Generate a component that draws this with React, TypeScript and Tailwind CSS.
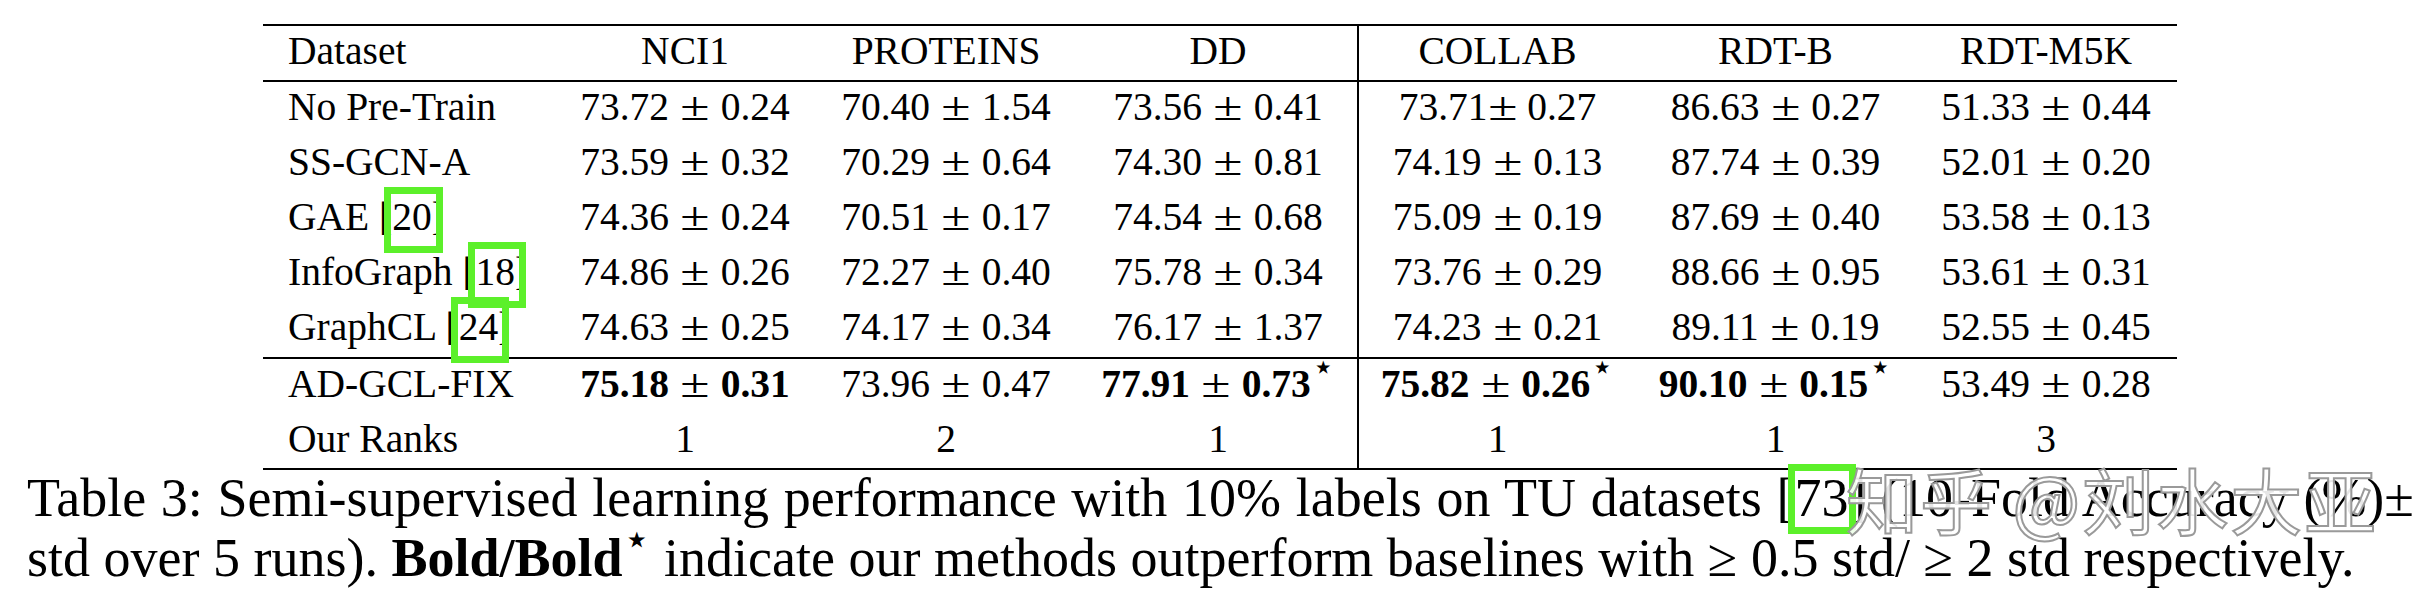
import { ReactNode } from "react";

// column widths measured off the reference (table runs x 263 -> 2177)
const COLS = "grid grid-cols-[294px_256px_266px_278px_279px_279px_262px]";

const HEAD = ["Dataset", "NCI1", "PROTEINS", "DD", "COLLAB", "RDT-B", "RDT-M5K"];

type Row = { name: ReactNode; vals: string[] };

function Cite({ n, box }: { n: string; box: string }) {
  return (
    <>
      [
      <span className="relative">
        {n}
        <span className={`absolute border-[7px] border-[#5cf02a] ${box}`} />
      </span>
      ]
    </>
  );
}

const TABLE_BOX = "-left-[8px] -right-[11px] -top-[8px] -bottom-[14px]";

// "**" prefix = bold, trailing "*" = star; "73.71±" (no space) keeps the tight left side
function Val({ v }: { v: string }) {
  if (!v.includes("±")) return <>{v}</>;
  const bold = v.startsWith("**");
  const star = v.endsWith("*") && bold;
  const tight = /\d±/.test(v);
  const clean = v.replace(/^\*\*/, "").replace(/\*+$/, "");
  const [a, b] = clean.split("±").map((s) => s.trim());
  return (
    <>
      <span className={bold ? "font-bold" : ""}>{a}</span>
      <span className={`inline-block scale-x-[1.35] ${tight ? "ml-[4px] mr-[14px]" : "mx-[15px]"}`}>±</span>
      <span className={bold ? "font-bold" : ""}>{b}</span>
      {star && <sup className="ml-[1px] text-[36px] font-['DejaVu_Serif',serif]">⋆</sup>}
    </>
  );
}

const TOP: Row[] = [
  { name: "No Pre-Train", vals: ["73.72 ± 0.24", "70.40 ± 1.54", "73.56 ± 0.41", "73.71± 0.27", "86.63 ± 0.27", "51.33 ± 0.44"] },
  { name: "SS-GCN-A", vals: ["73.59 ± 0.32", "70.29 ± 0.64", "74.30 ± 0.81", "74.19 ± 0.13", "87.74 ± 0.39", "52.01 ± 0.20"] },
  { name: <>GAE <Cite n="20" box={TABLE_BOX} /></>, vals: ["74.36 ± 0.24", "70.51 ± 0.17", "74.54 ± 0.68", "75.09 ± 0.19", "87.69 ± 0.40", "53.58 ± 0.13"] },
  { name: <>InfoGraph <Cite n="18" box={TABLE_BOX} /></>, vals: ["74.86 ± 0.26", "72.27 ± 0.40", "75.78 ± 0.34", "73.76 ± 0.29", "88.66 ± 0.95", "53.61 ± 0.31"] },
  { name: <>GraphCL <Cite n="24" box={TABLE_BOX} /></>, vals: ["74.63 ± 0.25", "74.17 ± 0.34", "76.17 ± 1.37", "74.23 ± 0.21", "89.11 ± 0.19", "52.55 ± 0.45"] },
];

const BOTTOM: Row[] = [
  { name: "AD-GCL-FIX", vals: ["**75.18 ± 0.31", "73.96 ± 0.47", "**77.91 ± 0.73*", "**75.82 ± 0.26*", "**90.10 ± 0.15*", "53.49 ± 0.28"] },
  { name: "Our Ranks", vals: ["1", "2", "1", "1", "1", "3"] },
];

function Cells({ cells, h }: { cells: ReactNode[]; h: string }) {
  return (
    <div className={COLS}>
      {cells.map((c, i) => (
        <div
          key={i}
          className={`${h} leading-[50px] whitespace-nowrap ${i === 0 ? "pl-[25px] text-left" : "text-center"} ${i === 4 ? "border-l-2 border-black" : ""}`}
        >
          {c}
        </div>
      ))}
    </div>
  );
}

export default function App() {
  return (
    <div className="relative h-[600px] w-[2433px] overflow-hidden bg-white font-['Liberation_Serif',serif] text-black">
      <div className="pl-[263px] pt-[24px]">
        <div className="w-[1914px] border-y-2 border-black text-[39.5px]">
          <div className="border-b-2 border-black">
            <Cells h="h-[54px]" cells={HEAD} />
          </div>
          <div className="border-b-2 border-black">
            {TOP.map((r, i) => (
              <Cells key={i} h="h-[55px]" cells={[r.name, ...r.vals.map((v, j) => <Val key={j} v={v} />)]} />
            ))}
          </div>
          {BOTTOM.map((r, i) => (
            <Cells key={i} h={i === 0 ? "h-[55px]" : "h-[54px]"} cells={[r.name, ...r.vals.map((v, j) => <Val key={j} v={v} />)]} />
          ))}
        </div>
      </div>

      <div className="-mt-[2px] ml-[27px] w-[2387px] text-[54px] leading-[60px]">
        <p className="whitespace-nowrap text-justify [text-align-last:justify]">
          Table 3: Semi-supervised learning performance with 10% labels on TU datasets{" "}
          <Cite n="73" box="-left-[6px] -right-[8px] -top-[4px] -bottom-[6px]" /> (10-Fold Accuracy (%)±
        </p>
        <p className="whitespace-nowrap">
          std over 5 runs). <b>Bold/Bold</b>
          <sup className="text-[44px] font-['DejaVu_Serif',serif]">⋆</sup> indicate our methods outperform baselines with ≥ 0.5 std/ ≥ 2 std respectively.
        </p>
      </div>

      {/* zhihu watermark */}
      <div className="absolute left-[1846px] top-[462px] whitespace-nowrap font-['Noto_Sans_CJK_SC',sans-serif] text-[72px] leading-[72px] tracking-[2px] text-white/90 [-webkit-text-stroke:2px_#9a9a9a]">
        知乎 @刘水大亚
      </div>
    </div>
  );
}
